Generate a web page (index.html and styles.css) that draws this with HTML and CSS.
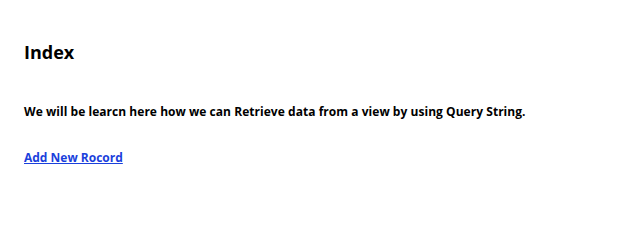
FILE: index.html
```html
<!DOCTYPE html>
<html>
<head>
<meta charset="utf-8">
<link rel="stylesheet" href="styles.css">
</head>
<body>
<main class="page">
<h2 class="title">Index</h2>
<p class="intro">We will be learcn here how we can Retrieve data from a view by using Query String.</p>
<p class="actions"><a class="link" href="#">Add New Rocord</a></p>
</main>
</body>
</html>
```
FILE: styles.css
```css
html, body { margin: 0; padding: 0; background: #fff; }
body { font-family: "Open Sans", "DejaVu Sans", sans-serif; color: #000; }
.page { padding: 40px 24px 0 24px; }
.title { margin: 0; font-size: 18px; font-weight: 700; line-height: 24px; }
.intro { margin: 39px 0 0 0; font-size: 12px; font-weight: 700; line-height: 18px; letter-spacing: 0.04px; }
.actions { margin: 28px 0 0 0; font-size: 12px; font-weight: 700; line-height: 18px; }
.link { color: #1a40dc; text-decoration: underline; }
```
